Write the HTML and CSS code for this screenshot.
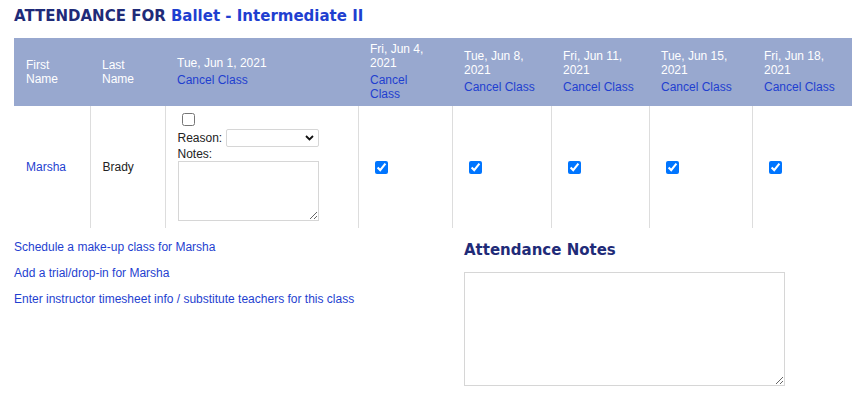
FILE: index.html
```html
<!DOCTYPE html>
<html lang="en">
<head>
    <meta charset="UTF-8">
    <title>Attendance</title>
    <link rel="stylesheet" href="styles.css">
</head>
<body>
<div class="page">
    <h1 class="title">ATTENDANCE FOR <a href="#">Ballet - Intermediate II</a></h1>

    <table class="attendance">
        <colgroup>
            <col style="width:76px">
            <col style="width:75px">
            <col style="width:193px">
            <col style="width:94px">
            <col style="width:99px">
            <col style="width:98px">
            <col style="width:103px">
            <col style="width:100px">
        </colgroup>
        <thead>
            <tr>
                <th>First<br>Name</th>
                <th>Last<br>Name</th>
                <th><div>Tue, Jun 1, 2021</div><a class="cancel" href="#">Cancel Class</a></th>
                <th><div>Fri, Jun 4, 2021</div><a class="cancel" href="#">Cancel Class</a></th>
                <th><div>Tue, Jun 8, 2021</div><a class="cancel" href="#">Cancel Class</a></th>
                <th><div>Fri, Jun 11, 2021</div><a class="cancel" href="#">Cancel Class</a></th>
                <th><div>Tue, Jun 15, 2021</div><a class="cancel" href="#">Cancel Class</a></th>
                <th><div>Fri, Jun 18, 2021</div><a class="cancel" href="#">Cancel Class</a></th>
            </tr>
        </thead>
        <tbody>
            <tr>
                <td><a href="#">Marsha</a></td>
                <td>Brady</td>
                <td class="absent">
                    <input type="checkbox" class="present">
                    <div class="reason">Reason: <span class="select-wrap"><select><option></option><option>Sick</option><option>Vacation</option></select><svg class="chevron" width="9" height="6" viewBox="0 0 9 6"><path d="M1 1l3.5 3.5L8 1" fill="none" stroke="#111" stroke-width="1.8"/></svg></span></div>
                    <div>Notes:</div>
                    <textarea class="cell-notes"></textarea>
                </td>
                <td><input type="checkbox" checked></td>
                <td><input type="checkbox" checked></td>
                <td><input type="checkbox" checked></td>
                <td><input type="checkbox" checked></td>
                <td><input type="checkbox" checked></td>
            </tr>
        </tbody>
    </table>

    <div class="bottom">
        <div class="links">
            <a href="#">Schedule a make-up class for Marsha</a>
            <a href="#">Add a trial/drop-in for Marsha</a>
            <a href="#">Enter instructor timesheet info / substitute teachers for this class</a>
        </div>
        <div class="notes">
            <h2>Attendance Notes</h2>
            <textarea class="notes-box"></textarea>
        </div>
    </div>
</div>
</body>
</html>
```

FILE: styles.css
```css
body {
    margin: 0;
    font-family: "Liberation Sans", Arial, sans-serif;
    font-size: 12px;
    color: #333;
    background: #fff;
}
a {
    color: #1f3fd0;
    text-decoration: none;
}
.page {
    padding: 7px 14px;
}
.title {
    margin: 0 0 13px 0;
    font-family: "DejaVu Sans", Verdana, sans-serif;
    font-size: 15px;
    line-height: 18px;
    font-weight: bold;
    color: #1f2b78;
}
.title a {
    color: #1f3fd0;
}
.attendance {
    border-collapse: collapse;
    table-layout: fixed;
    width: 838px;
}
.attendance th {
    background-color: #98a8cf;
    color: #fff;
    font-weight: normal;
    text-align: left;
    vertical-align: middle;
    line-height: 14px;
    padding: 4px 12px 5px 12px;
}
.attendance th .cancel {
    display: block;
    margin-top: 3px;
}
.attendance td {
    border-left: 1px solid #ddd;
    vertical-align: middle;
    padding: 4px 12px;
    line-height: 14px;
    color: #222;
}
.attendance td:first-child {
    border-left: none;
}
.attendance input[type="checkbox"] {
    margin: 3px 3px 3px 4px;
    width: 13px;
    height: 13px;
    vertical-align: middle;
}
.absent .present {
    display: block;
}
.reason {
    line-height: 18px;
}
.select-wrap {
    position: relative;
    display: inline-block;
    vertical-align: top;
}
.select-wrap select {
    appearance: none;
    -webkit-appearance: none;
    width: 93px;
    height: 18px;
    border: 1px solid #d6d6d6;
    border-radius: 2px;
    background: #fff;
    font-family: "Liberation Sans", Arial, sans-serif;
    font-size: 12px;
    margin: 0;
    padding: 0 4px;
}
.chevron {
    position: absolute;
    right: 5px;
    top: 6px;
    pointer-events: none;
}
.cell-notes {
    width: 141px;
    height: 60px;
    box-sizing: border-box;
    border: 1px solid #d6d6d6;
    margin: 0;
    padding: 2px;
}
.bottom {
    display: flex;
}
.links {
    width: 450px;
    padding-top: 12px;
}
.links a {
    display: block;
    line-height: 14px;
    margin-bottom: 12px;
}
.notes h2 {
    margin: 13px 0 13px 0;
    font-family: "DejaVu Sans", Verdana, sans-serif;
    font-size: 15px;
    line-height: 18px;
    color: #1f2b78;
}
.notes-box {
    display: block;
    width: 321px;
    height: 114px;
    box-sizing: border-box;
    border: 1px solid #d6d6d6;
    margin: 0;
}
```
